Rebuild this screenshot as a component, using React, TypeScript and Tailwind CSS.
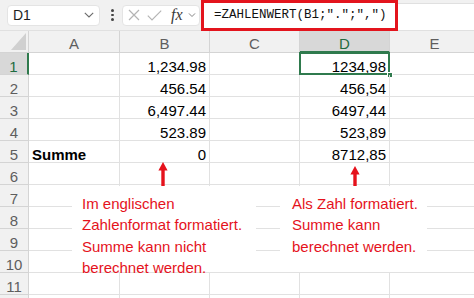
import React from 'react';

const B: Record<number, string> = { 1: '1,234.98', 2: '456.54', 3: '6,497.44', 4: '523.89', 5: '0' };
const D: Record<number, string> = { 1: '1234,98', 2: '456,54', 3: '6497,44', 4: '523,89', 5: '8712,85' };
const rows = [1, 2, 3, 4, 5, 6, 7, 8, 9, 10, 11, 12];

function Chevron({ className }: { className?: string }) {
  return (
    <svg className={className} width="10" height="6" viewBox="0 0 10 6" fill="none">
      <path d="M0.8 0.8 L5 5 L9.2 0.8" stroke="#6b6b6b" strokeWidth="1.1" />
    </svg>
  );
}

function UpArrow({ h }: { h: number }) {
  return (
    <svg width="10" height={h} viewBox={`0 0 10 ${h}`}>
      <polygon points={`5,0 9.6,8.5 0.4,8.5`} fill="#e5121c" />
      <rect x="3.3" y="7" width="3.4" height={h - 7} fill="#e5121c" />
    </svg>
  );
}

export default function App() {
  const cellBase = 'h-[22px] border-r border-b border-[#e1e1e1] leading-[22px] pt-[3px] text-[15px] text-black whitespace-nowrap overflow-visible';
  return (
    <div className="relative w-[474px] h-[298px] overflow-hidden bg-white font-['Liberation_Sans',Arial,sans-serif]">
      {/* Formula bar */}
      <div className="h-[31px] bg-[#f1f1f1] flex items-center border-b border-[#e0e0e0]">
        <div className="ml-[7px] w-[93px] h-[21px] bg-white rounded-[4px] border border-[#e4e4e4] flex items-center justify-between pl-[5px] pr-[5px]">
          <span className="text-[14px] leading-none text-[#1e1e1e]">D1</span>
          <Chevron />
        </div>
        <div className="ml-[11px] w-[3px] flex flex-col items-center gap-[2px]">
          <span className="w-[2.5px] h-[2.5px] rounded-full bg-[#444]" />
          <span className="w-[2.5px] h-[2.5px] rounded-full bg-[#444]" />
          <span className="w-[2.5px] h-[2.5px] rounded-full bg-[#444]" />
        </div>
        <div className="ml-[8px] w-[78px] h-[21px] bg-white rounded-[4px] border border-[#e4e4e4] flex items-center">
          <svg className="ml-[5px]" width="12" height="12" viewBox="0 0 12 12">
            <path d="M1 1 L11 11 M11 1 L1 11" stroke="#b4b4b4" strokeWidth="1.2" />
          </svg>
          <svg className="ml-[7px]" width="15" height="11" viewBox="0 0 15 11" fill="none">
            <path d="M0.8 5.6 L5 9.8 L14.2 0.6" stroke="#b4b4b4" strokeWidth="1.2" />
          </svg>
          <span className="ml-[9px] font-['Liberation_Serif',serif] italic text-[16px] leading-none text-[#3a3a3a]">fx</span>
          <Chevron className="ml-[4px] scale-75" />
        </div>
        <div className="ml-[1px] flex-1 h-[31px] relative">
          <div className="absolute left-0 right-0 top-[3px] bottom-[1px] bg-white border-t border-[#e0e0e0]" />
          <div className="absolute left-0 top-0 w-[197px] h-[31px] border-[3px] border-[#e3141d] bg-white flex items-center pl-[10px]">
            <span className="font-['Liberation_Mono',monospace] text-[12.5px] leading-none text-[#111] pt-[1px]">=ZAHLENWERT(B1;".";",")</span>
          </div>
        </div>
      </div>

      {/* Grid */}
      <div className="grid grid-cols-[29px_91px_90px_90px_90px_90px]">
        {/* header row */}
        <div className="h-[22px] bg-[#f1f1f1] border-r border-b border-[#d4d4d4] relative">
          <svg className="absolute right-[2px] bottom-[2px]" width="15" height="17" viewBox="0 0 15 17">
            <polygon points="15,0 15,17 0,17" fill="#d0d0d0" />
          </svg>
        </div>
        {['A', 'B', 'C', 'D', 'E'].map((c) => (
          <div
            key={c}
            className={
              c === 'D'
                ? 'h-[22px] bg-[#d8d8d8] border-r border-[#d4d4d4] border-b-2 border-b-[#2f7a4d] text-center leading-[22px] pt-[2px] text-[15px] text-[#1f6b40]'
                : 'h-[22px] bg-[#f1f1f1] border-r border-b border-[#d4d4d4] text-center leading-[22px] pt-[2px] text-[15px] text-[#5e5e5e]'
            }
          >
            {c}
          </div>
        ))}
        {rows.map((r) => (
          <React.Fragment key={r}>
            <div
              className={
                r === 1
                  ? 'h-[22px] bg-[#d8d8d8] border-r-2 border-r-[#2f7a4d] border-b border-[#d4d4d4] text-center leading-[22px] pt-[3px] text-[15px] text-[#1f6b40]'
                  : 'h-[22px] bg-[#f1f1f1] border-r border-b border-[#d4d4d4] text-center leading-[22px] pt-[3px] text-[15px] text-[#5e5e5e]'
              }
            >
              {r <= 11 ? r : ''}
            </div>
            <div className={`${cellBase} pl-[3px] font-bold`}>{r === 5 ? 'Summe' : ''}</div>
            <div className={`${cellBase} text-right pr-[3px]`}>{B[r] ?? ''}</div>
            <div className={cellBase} />
            <div className={`${cellBase} text-right pr-[3px] relative`}>
              {D[r] ?? ''}
              {r === 1 && (
                <>
                  <div className="absolute left-[-1px] top-[-1px] right-[-1px] bottom-[-1px] border-2 border-[#2f7a4d]" />
                  <div className="absolute right-[-4px] bottom-[-4px] w-[6px] h-[6px] bg-[#2f7a4d] border border-white" />
                </>
              )}
            </div>
            <div className={cellBase} />
          </React.Fragment>
        ))}
      </div>

      {/* Arrows */}
      <div className="absolute left-[158px] top-[162px]">
        <UpArrow h={26} />
      </div>
      <div className="absolute left-[350px] top-[166px]">
        <UpArrow h={22} />
      </div>

      {/* Annotations */}
      <div className="absolute left-[72px] top-[186px] w-[184px] h-[86px] bg-white pl-[10px] pt-[7px] text-[15px] leading-[21.3px] text-[#e5121c] whitespace-nowrap">
        <div>Im englischen</div>
        <div>Zahlenformat formatiert.</div>
        <div>Summe kann nicht</div>
        <div>berechnet werden.</div>
      </div>
      <div className="absolute left-[280px] top-[186px] w-[147px] h-[86px] bg-white pl-[12px] pt-[7px] text-[15px] leading-[21.3px] text-[#e5121c] whitespace-nowrap">
        <div>Als Zahl formatiert.</div>
        <div>Summe kann</div>
        <div>berechnet werden.</div>
      </div>
    </div>
  );
}
